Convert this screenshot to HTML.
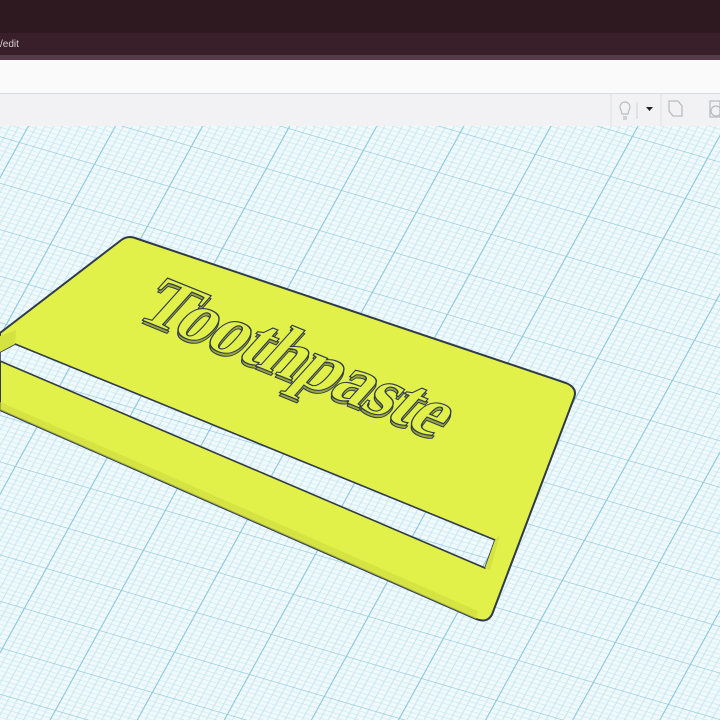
<!DOCTYPE html>
<html><head><style>
body{margin:0;width:720px;height:720px;overflow:hidden;font-family:"Liberation Sans",sans-serif;background:#eaf6fa}
</style></head><body>
<svg width="720" height="720" viewBox="0 0 720 720" style="position:absolute;left:0;top:0">
<defs>
<pattern id="g" width="50" height="50" patternUnits="userSpaceOnUse" patternTransform="matrix(1.5,0.44,-0.44,0.8,10,0)">
<rect width="50" height="50" fill="#f0f9fc"/>
<path d="M5 0V50M10 0V50M15 0V50M20 0V50M25 0V50M30 0V50M35 0V50M40 0V50M45 0V50M0 5H50M0 10H50M0 15H50M0 20H50M0 25H50M0 30H50M0 35H50M0 40H50M0 45H50" stroke="#c4e5f0" stroke-width="0.6"/>
<path d="M0 0V50M0 0H50" stroke="#86c5dc" stroke-width="1.4"/>
</pattern>
</defs>
<rect x="0" y="126" width="720" height="594" fill="url(#g)"/>
<rect x="0" y="0" width="720" height="38" fill="#2e1920"/>
<rect x="0" y="38" width="720" height="6" fill="#4d3540"/>
<rect x="0" y="33" width="720" height="22" fill="#381f2a"/>
<rect x="0" y="55" width="720" height="5" fill="#543c47"/>
<text x="0" y="47" font-size="10" fill="#d8cdd2" font-family="Liberation Sans">/edit</text>
<rect x="0" y="60" width="720" height="33" fill="#fafafa"/>
<rect x="0" y="93" width="720" height="1" fill="#d8dde0"/>
<rect x="0" y="94" width="720" height="32" fill="#f2f2f4"/>
<line x1="611" y1="94" x2="611" y2="126" stroke="#e2e2e4"/>
<line x1="661" y1="94" x2="661" y2="126" stroke="#e2e2e4"/>
<path d="M621 110a5 5 0 1 1 8 0l-1 4h-6z M623 117h4 M623 119h4" fill="none" stroke="#b8bcc2" stroke-width="1.2"/>
<line x1="637" y1="102" x2="637" y2="119" stroke="#d0d2d6"/>
<path d="M646 107h7l-3.5 4z" fill="#222"/>
<path d="M669 101h9l4 5v10h-9l-4-5z" fill="none" stroke="#b8bcc2" stroke-width="1.3"/>
<path d="M710 101h10v16h-10z" fill="none" stroke="#b8bcc2" stroke-width="1.3"/>
<circle cx="716" cy="111" r="5" fill="none" stroke="#b8bcc2" stroke-width="1.3"/>
<path d="M120 241 Q127 235 135 238 L566 383 Q578 388 574 398 L493 612 Q489 624 476 619 L0 410 L0 333 Z" fill="#e2f04a" stroke="#2f3b4a" stroke-width="2"/>
<path d="M0 402 L478 611 L476 619 L0 410Z" fill="#d0dd40" opacity="0.7"/>
<path d="M15 344 L495 540 L485 568 L0 361 L0 352 Z" fill="url(#g)" stroke="#2f3b4a" stroke-width="1.6"/>
<path d="M0 336 L16 330 L15 344 L0 352Z" fill="#d4e242"/>
<path d="M495 540 L500 535 L490 570 L485 568Z" fill="#d4e242"/>
<g transform="translate(132,316) rotate(22) skewX(-20)">
<text x="2" y="3" font-family="Liberation Serif" font-weight="bold" font-size="74" fill="#9aa63a" stroke="#2f3b4a" stroke-width="1" textLength="325">Toothpaste</text>
<text x="0" y="0" font-family="Liberation Serif" font-weight="bold" font-size="74" fill="#e2f04a" stroke="#2f3b4a" stroke-width="1.2" textLength="325">Toothpaste</text>
</g>
</svg>
</body></html>
